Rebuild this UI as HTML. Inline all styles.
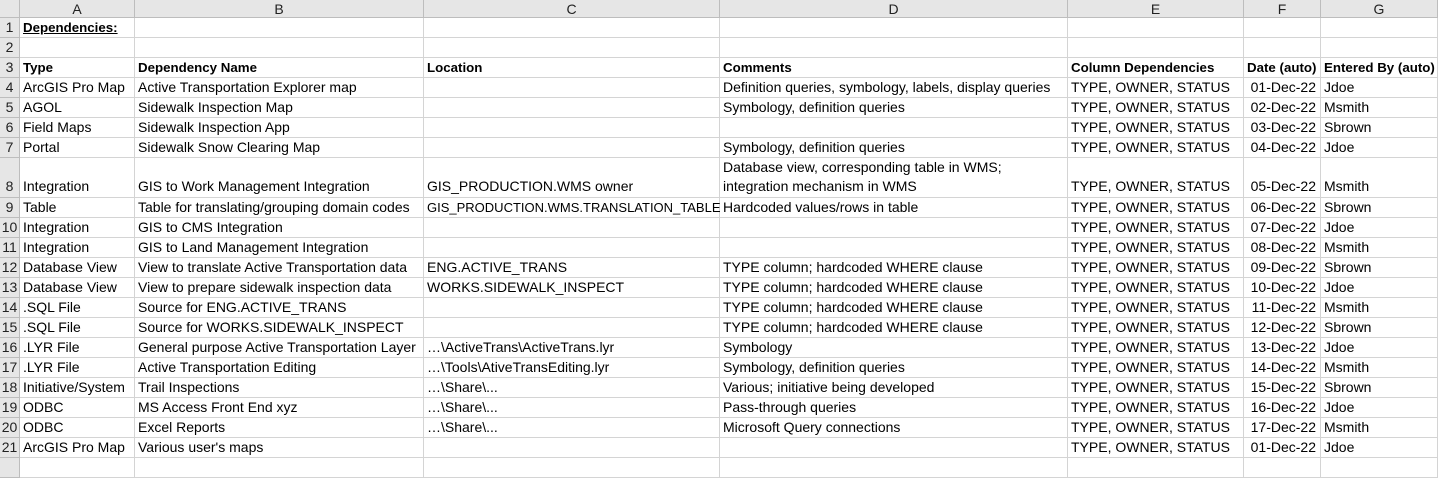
<!DOCTYPE html>
<html><head><meta charset="utf-8"><style>
html,body{margin:0;padding:0;background:#fff;width:1441px;height:462px;overflow:hidden}
table{border-collapse:separate;border-spacing:0;table-layout:fixed;font-family:"Liberation Sans",Arial,sans-serif;font-size:14px;color:#000;position:absolute;left:0;top:0;width:1438px}
td{border-right:1px solid #d4d4d4;border-bottom:1px solid #d4d4d4;padding:0 0 1px 3px;height:20px;white-space:nowrap;overflow:visible;vertical-align:bottom;line-height:17px;box-sizing:border-box}
tr.h td{background:#e6e6e6;text-align:center;height:18px;line-height:16px;vertical-align:middle;border-color:#bdbdbd;color:#222;padding:0}
td.n{background:#e6e6e6;text-align:center;padding:0 0 1px 0;border-color:#bdbdbd;color:#222}
tr.t td{height:40px;line-height:19px}
td.r{text-align:right;padding-right:4px}
b{font-weight:bold;font-size:13.3px}
</style></head><body>
<table>
<colgroup><col style="width:20px"><col style="width:115px"><col style="width:289px"><col style="width:296px"><col style="width:348px"><col style="width:176px"><col style="width:77px"><col style="width:117px"></colgroup>
<tr class="h"><td></td><td>A</td><td>B</td><td>C</td><td>D</td><td>E</td><td>F</td><td>G</td></tr>
<tr><td class="n">1</td><td><b><u>Dependencies:</u></b></td><td></td><td></td><td></td><td></td><td></td><td></td></tr>
<tr><td class="n">2</td><td></td><td></td><td></td><td></td><td></td><td></td><td></td></tr>
<tr><td class="n">3</td><td><b>Type</b></td><td><b>Dependency Name</b></td><td><b>Location</b></td><td><b>Comments</b></td><td><b>Column Dependencies</b></td><td><b>Date (auto)</b></td><td><b>Entered By (auto)</b></td></tr>
<tr><td class="n">4</td><td>ArcGIS Pro Map</td><td>Active Transportation Explorer map</td><td></td><td>Definition queries, symbology, labels, display queries</td><td>TYPE, OWNER, STATUS</td><td class="r">01-Dec-22</td><td>Jdoe</td></tr>
<tr><td class="n">5</td><td>AGOL</td><td>Sidewalk Inspection Map</td><td></td><td>Symbology, definition queries</td><td>TYPE, OWNER, STATUS</td><td class="r">02-Dec-22</td><td>Msmith</td></tr>
<tr><td class="n">6</td><td>Field Maps</td><td>Sidewalk Inspection App</td><td></td><td></td><td>TYPE, OWNER, STATUS</td><td class="r">03-Dec-22</td><td>Sbrown</td></tr>
<tr><td class="n">7</td><td>Portal</td><td>Sidewalk Snow Clearing Map</td><td></td><td>Symbology, definition queries</td><td>TYPE, OWNER, STATUS</td><td class="r">04-Dec-22</td><td>Jdoe</td></tr>
<tr class="t"><td class="n">8</td><td>Integration</td><td>GIS to Work Management Integration</td><td>GIS_PRODUCTION.WMS owner</td><td style="white-space:normal">Database view, corresponding table in WMS;<br>integration mechanism in WMS</td><td>TYPE, OWNER, STATUS</td><td class="r">05-Dec-22</td><td>Msmith</td></tr>
<tr><td class="n">9</td><td>Table</td><td>Table for translating/grouping domain codes</td><td style="font-size:13px">GIS_PRODUCTION.WMS.TRANSLATION_TABLE</td><td>Hardcoded values/rows in table</td><td>TYPE, OWNER, STATUS</td><td class="r">06-Dec-22</td><td>Sbrown</td></tr>
<tr><td class="n">10</td><td>Integration</td><td>GIS to CMS Integration</td><td></td><td></td><td>TYPE, OWNER, STATUS</td><td class="r">07-Dec-22</td><td>Jdoe</td></tr>
<tr><td class="n">11</td><td>Integration</td><td>GIS to Land Management Integration</td><td></td><td></td><td>TYPE, OWNER, STATUS</td><td class="r">08-Dec-22</td><td>Msmith</td></tr>
<tr><td class="n">12</td><td>Database View</td><td>View to translate Active Transportation data</td><td>ENG.ACTIVE_TRANS</td><td>TYPE column; hardcoded WHERE clause</td><td>TYPE, OWNER, STATUS</td><td class="r">09-Dec-22</td><td>Sbrown</td></tr>
<tr><td class="n">13</td><td>Database View</td><td>View to prepare sidewalk inspection data</td><td>WORKS.SIDEWALK_INSPECT</td><td>TYPE column; hardcoded WHERE clause</td><td>TYPE, OWNER, STATUS</td><td class="r">10-Dec-22</td><td>Jdoe</td></tr>
<tr><td class="n">14</td><td>.SQL File</td><td>Source for ENG.ACTIVE_TRANS</td><td></td><td>TYPE column; hardcoded WHERE clause</td><td>TYPE, OWNER, STATUS</td><td class="r">11-Dec-22</td><td>Msmith</td></tr>
<tr><td class="n">15</td><td>.SQL File</td><td>Source for WORKS.SIDEWALK_INSPECT</td><td></td><td>TYPE column; hardcoded WHERE clause</td><td>TYPE, OWNER, STATUS</td><td class="r">12-Dec-22</td><td>Sbrown</td></tr>
<tr><td class="n">16</td><td>.LYR File</td><td>General purpose Active Transportation Layer</td><td>…\ActiveTrans\ActiveTrans.lyr</td><td>Symbology</td><td>TYPE, OWNER, STATUS</td><td class="r">13-Dec-22</td><td>Jdoe</td></tr>
<tr><td class="n">17</td><td>.LYR File</td><td>Active Transportation Editing</td><td>…\Tools\AtiveTransEditing.lyr</td><td>Symbology, definition queries</td><td>TYPE, OWNER, STATUS</td><td class="r">14-Dec-22</td><td>Msmith</td></tr>
<tr><td class="n">18</td><td>Initiative/System</td><td>Trail Inspections</td><td>…\Share\...</td><td>Various; initiative being developed</td><td>TYPE, OWNER, STATUS</td><td class="r">15-Dec-22</td><td>Sbrown</td></tr>
<tr><td class="n">19</td><td>ODBC</td><td>MS Access Front End xyz</td><td>…\Share\...</td><td>Pass-through queries</td><td>TYPE, OWNER, STATUS</td><td class="r">16-Dec-22</td><td>Jdoe</td></tr>
<tr><td class="n">20</td><td>ODBC</td><td>Excel Reports</td><td>…\Share\...</td><td>Microsoft Query connections</td><td>TYPE, OWNER, STATUS</td><td class="r">17-Dec-22</td><td>Msmith</td></tr>
<tr><td class="n">21</td><td>ArcGIS Pro Map</td><td>Various user's maps</td><td></td><td></td><td>TYPE, OWNER, STATUS</td><td class="r">01-Dec-22</td><td>Jdoe</td></tr>
<tr><td class="n"></td><td></td><td></td><td></td><td></td><td></td><td></td><td></td></tr>
</table>
</body></html>
